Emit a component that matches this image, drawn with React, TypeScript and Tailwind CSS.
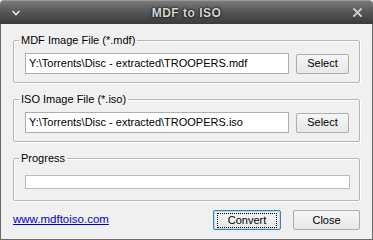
import React from "react";

const font = { fontFamily: '"Liberation Sans", Arial, sans-serif' };

function Group({ title, children }: { title: string; children: React.ReactNode }) {
  return (
    <fieldset className="border border-[#b5b5b5] rounded-[2px] shadow-[inset_1px_1px_0_#ffffff,1px_1px_0_#ffffff]">
      <legend className="px-[2px] ml-[5px] text-[11px] leading-[14px] text-black">{title}</legend>
      <div className="pl-[11px] pr-[9px] pt-[6px] pb-[8px]">{children}</div>
    </fieldset>
  );
}

function Btn({ children, focused }: { children: React.ReactNode; focused?: boolean }) {
  return (
    <div
      className={
        "h-[20px] flex items-center justify-center rounded-[2px] border bg-gradient-to-b from-[#f6f6f6] to-[#e8e8e8] text-[11px] text-black " +
        (focused ? "border-[#3c7fb1] shadow-[inset_0_0_0_1px_#b9dcf5]" : "border-[#adadad]")
      }
    >
      {focused ? (
        <span className="border border-dotted border-black leading-[13px] w-[60px] text-center">{children}</span>
      ) : (
        children
      )}
    </div>
  );
}

function FileRow({ value }: { value: string }) {
  return (
    <div className="flex items-center gap-[7px]">
      <div className="w-[264px] h-[21px] border border-[#abadb3] bg-white flex items-center pl-[3px] text-[11px] text-black whitespace-nowrap overflow-hidden">
        {value}
      </div>
      <div className="w-[53px]">
        <Btn>Select</Btn>
      </div>
    </div>
  );
}

export default function App() {
  return (
    <div className="w-[373px] h-[240px] bg-[#f0f0f0] flex flex-col overflow-hidden" style={font}>
      <div className="h-[24px] shrink-0 rounded-t-[4px] bg-gradient-to-b from-[#7a7a7a] via-[#555555] to-[#3a3a3a] flex items-center justify-between px-[10px] border-t border-[#9a9a9a]">
        <svg width="10" height="8" viewBox="0 0 10 8" className="ml-[1px]">
          <path d="M1.5 2 L5 5.5 L8.5 2" stroke="#e8e8e8" strokeWidth="1.6" fill="none" />
        </svg>
        <span
          className="text-[12px] font-bold text-[#d8d8d8] tracking-[0.5px]"
          style={{ textShadow: "0 0 3px #000, 0 0 1px #000" }}
        >
          MDF to ISO
        </span>
        <svg width="11" height="11" viewBox="0 0 11 11">
          <path d="M2 2 L9 9 M9 2 L2 9" stroke="#d0d0d0" strokeWidth="1.8" strokeLinecap="square" />
        </svg>
      </div>
      <div className="flex-1 border-x border-b border-[#6a6a6a] flex flex-col px-[12px] pt-[9px]">
        <div className="flex flex-col gap-[9px]">
          <Group title="MDF Image File (*.mdf)">
            <FileRow value="Y:\Torrents\Disc - extracted\TROOPERS.mdf" />
          </Group>
          <Group title="ISO Image File (*.iso)">
            <FileRow value="Y:\Torrents\Disc - extracted\TROOPERS.iso" />
          </Group>
          <Group title="Progress">
            <div className="h-[14px] mt-[4px] mb-[3px] border border-[#bcbcbc] bg-white" />
          </Group>
        </div>
        <div className="flex items-center mt-[9px]">
          <span className="text-[11.5px] text-[#0000cc] underline">www.mdftoiso.com</span>
          <div className="ml-auto w-[68px]">
            <Btn focused>Convert</Btn>
          </div>
          <div className="ml-[12px] w-[67px]">
            <Btn>Close</Btn>
          </div>
        </div>
      </div>
    </div>
  );
}
